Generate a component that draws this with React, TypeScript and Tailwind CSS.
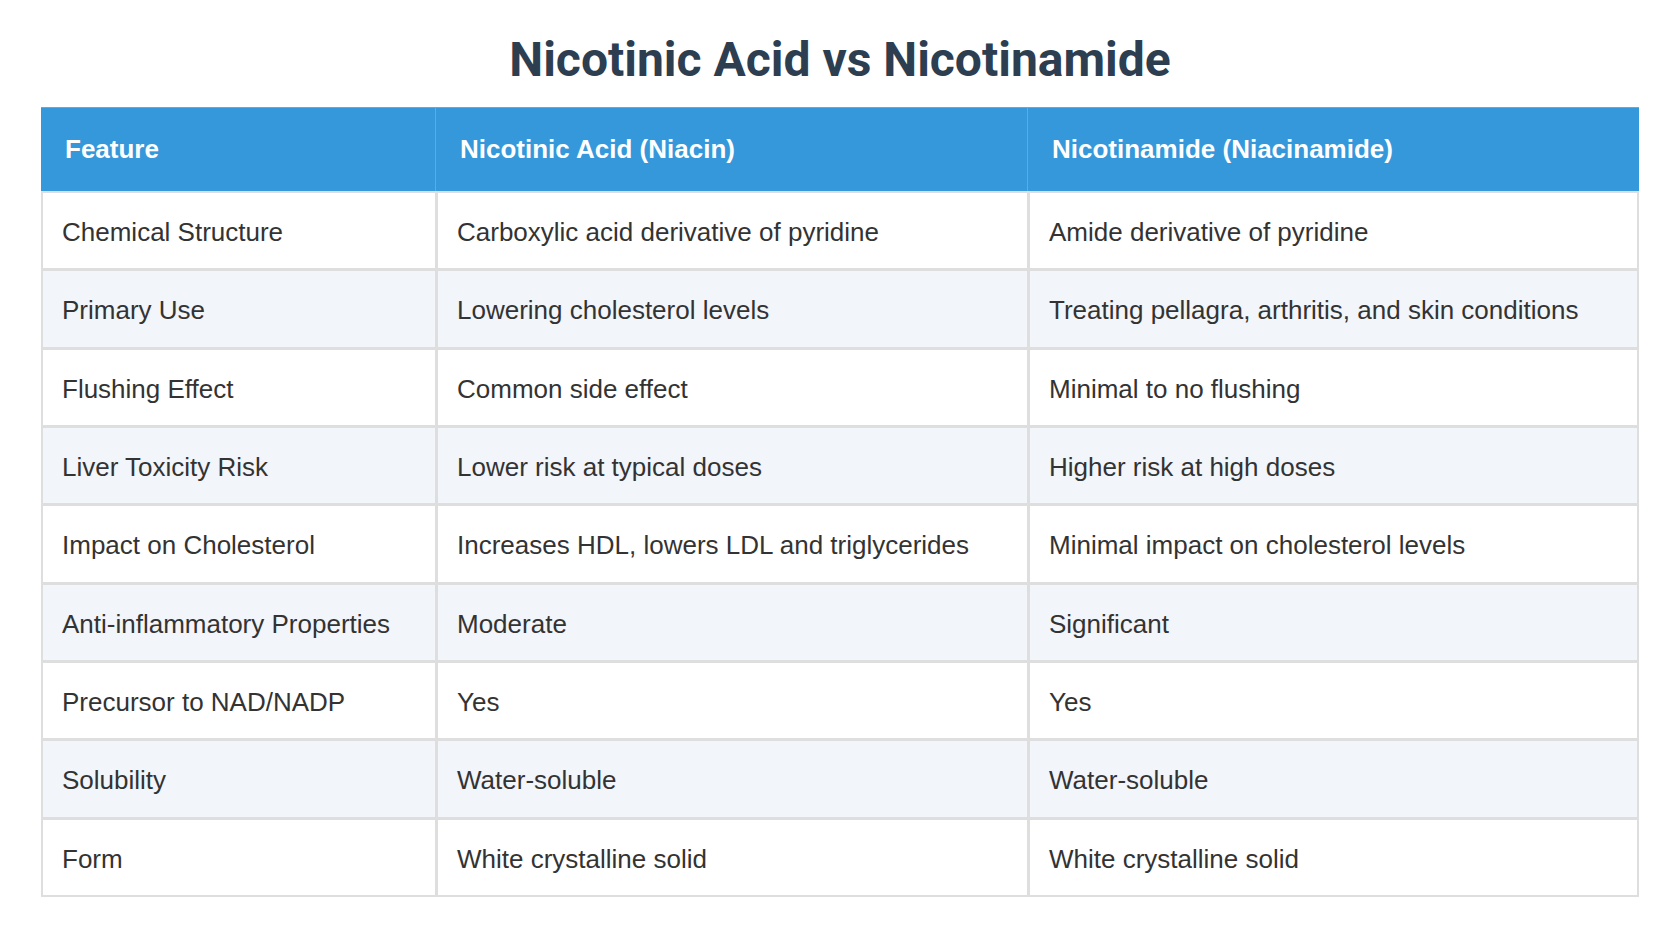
import React from "react";

const rows: [string, string, string][] = [
  ["Chemical Structure", "Carboxylic acid derivative of pyridine", "Amide derivative of pyridine"],
  ["Primary Use", "Lowering cholesterol levels", "Treating pellagra, arthritis, and skin conditions"],
  ["Flushing Effect", "Common side effect", "Minimal to no flushing"],
  ["Liver Toxicity Risk", "Lower risk at typical doses", "Higher risk at high doses"],
  ["Impact on Cholesterol", "Increases HDL, lowers LDL and triglycerides", "Minimal impact on cholesterol levels"],
  ["Anti-inflammatory Properties", "Moderate", "Significant"],
  ["Precursor to NAD/NADP", "Yes", "Yes"],
  ["Solubility", "Water-soluble", "Water-soluble"],
  ["Form", "White crystalline solid", "White crystalline solid"],
];

const headers = ["Feature", "Nicotinic Acid (Niacin)", "Nicotinamide (Niacinamide)"];

export default function App() {
  return (
    <div className="min-h-[940px] w-[1680px] bg-white px-[41px] pt-[31px]">
      <h1
        className="mb-[19px] text-center text-[48px] leading-[57px] font-bold text-[#2c3e50]"
        style={{ fontFamily: "Roboto, 'Liberation Sans', sans-serif" }}
      >
        Nicotinic Acid vs Nicotinamide
      </h1>
      <div
        className="w-[1598px]"
        style={{ fontFamily: "'Liberation Sans', Arial, sans-serif" }}
      >
        <div className="grid h-[84px] grid-cols-[395px_592px_611px] bg-[#3498db]">
          {headers.map((h, i) => (
            <div
              key={h}
              className={`flex items-center border-t border-[#5aade4] pl-[24px] text-[26px] font-bold text-white ${
                i < 2 ? "border-r" : ""
              }`}
            >
              {h}
            </div>
          ))}
        </div>
        <div className="border-r border-b border-[#dedede]">
          {rows.map((r, ri) => (
            <div
              key={r[0]}
              className={`grid h-[78.33px] grid-cols-[395px_592px_610px] ${
                ri % 2 === 1 ? "bg-[#f2f5fa]" : "bg-white"
              }`}
            >
              {r.map((c, ci) => (
                <div
                  key={ci}
                  className="flex items-center border-t-2 border-l-2 border-r border-b border-[#dedede] pt-[4px] pl-[19px] text-[26px] text-[#333333]"
                >
                  {c}
                </div>
              ))}
            </div>
          ))}
        </div>
      </div>
    </div>
  );
}
